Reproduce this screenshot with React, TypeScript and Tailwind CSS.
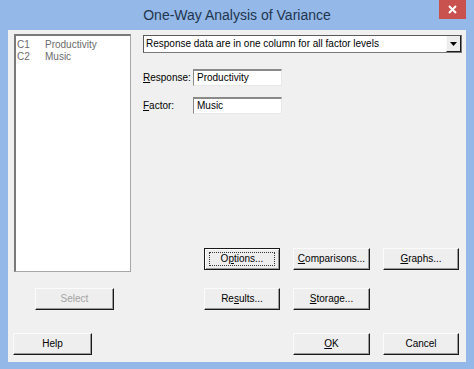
import { clsx } from "clsx";
import type { ReactNode } from "react";

function Btn({
  children,
  className,
  disabled,
  isDefault,
}: {
  children: ReactNode;
  className?: string;
  disabled?: boolean;
  isDefault?: boolean;
}) {
  return (
    <div
      className={clsx(
        "h-[22px] shrink-0 flex items-center justify-center bg-[#eeeeee] border",
        isDefault
          ? "border-[#1a1a1a] shadow-[inset_1px_1px_0_#ffffff,inset_-1px_-1px_0_#9a9a9a]"
          : "border-t-[#fbfbfb] border-l-[#fbfbfb] border-r-[#1a1a1a] border-b-[#1a1a1a] shadow-[inset_-1px_-1px_0_#9a9a9a]",
        disabled ? "text-[#a3a3a3]" : "text-black",
        className
      )}
    >
      {isDefault ? (
        <div className="w-[calc(100%-8px)] h-[14px] border border-dotted border-[#333] flex items-center justify-center">
          {children}
        </div>
      ) : (
        children
      )}
    </div>
  );
}

const U = ({ children }: { children: ReactNode }) => (
  <span className="underline underline-offset-[1px]">{children}</span>
);

export default function App() {
  return (
    <div
      className="w-[474px] h-[369px] bg-[#94b8e8] flex flex-col text-[10px] leading-[12px]"
      style={{ fontFamily: '"Liberation Sans", Arial, sans-serif' }}
    >
      {/* title bar */}
      <div className="h-[30px] relative flex items-center justify-center">
        <span className="text-[14px] text-[#22354f] pb-[1px]">One-Way Analysis of Variance</span>
        <div className="absolute top-0 right-[8px] w-[27px] h-[19px] bg-[#c9514e] flex items-center justify-center">
          <svg width="9" height="9" viewBox="0 0 9 9">
            <path d="M1 1 L8 8 M8 1 L1 8" stroke="#fff" strokeWidth="2" />
          </svg>
        </div>
      </div>

      {/* client area */}
      <div className="mx-[8px] h-[332px] bg-[#f0f0f0] flex flex-col">
        <div className="flex pt-[4px]">
          {/* variable list */}
          <div className="ml-[6px] w-[117px] h-[238px] bg-white border-t-2 border-l-2 border-t-[#7a7a7a] border-l-[#7a7a7a] border-r border-b border-r-[#a8a8a8] border-b-[#a8a8a8] pt-[3px] pl-[1px] text-[#6b6b6b]">
            <div className="flex h-[12px]">
              <span className="w-[28px]">C1</span>
              <span>Productivity</span>
            </div>
            <div className="flex h-[12px]">
              <span className="w-[28px]">C2</span>
              <span>Music</span>
            </div>
          </div>

          {/* right column */}
          <div className="ml-[12px] w-[319px] h-[238px] pt-[1px] flex flex-col">
            <div className="h-[18px] bg-white border border-[#7a7a7a] border-t-[#5a5a5a] border-l-[#5a5a5a] flex items-center">
              <span className="flex-1 pl-[2px]">Response data are in one column for all factor levels</span>
              <div className="w-[15px] h-full bg-[#ededed] border-l border-l-[#fafafa] border-r border-r-[#1a1a1a] border-b border-b-[#1a1a1a] flex items-center justify-center">
                <svg width="7" height="4" viewBox="0 0 7 4">
                  <path d="M0 0 H7 L3.5 4 Z" fill="#000" />
                </svg>
              </div>
            </div>

            <div className="flex items-center mt-[16px]">
              <span className="w-[50px]">
                <U>R</U>esponse:
              </span>
              <div className="w-[89px] h-[17px] bg-white border-t-2 border-l border-t-[#8a8a8a] border-l-[#8a8a8a] border-r border-b border-r-[#e8e8e8] border-b-[#e8e8e8] flex items-center pl-[3px]">
                Productivity
              </div>
            </div>

            <div className="flex items-center mt-[11px]">
              <span className="w-[50px]">
                <U>F</U>actor:
              </span>
              <div className="w-[89px] h-[17px] bg-white border-t-2 border-l border-t-[#8a8a8a] border-l-[#8a8a8a] border-r border-b border-r-[#e8e8e8] border-b-[#e8e8e8] flex items-center pl-[3px]">
                Music
              </div>
            </div>

            <div className="mt-auto mb-[2px] pl-[61px] flex gap-[13px]">
              <Btn isDefault className="w-[76px]">
                O<U>p</U>tions...
              </Btn>
              <Btn className="w-[77px]">
                <U>C</U>omparisons...
              </Btn>
              <Btn className="w-[76px]">
                <U>G</U>raphs...
              </Btn>
            </div>
          </div>
        </div>

        <div className="flex mt-[16px]">
          <Btn disabled className="ml-[27px] w-[79px]">
            Select
          </Btn>
          <Btn className="ml-[90px] w-[76px]">
            Re<U>s</U>ults...
          </Btn>
          <Btn className="ml-[13px] w-[77px]">
            <U>S</U>torage...
          </Btn>
        </div>

        <div className="flex mt-[23px]">
          <Btn className="ml-[5px] w-[79px]">Help</Btn>
          <Btn className="ml-[201px] w-[77px]">
            <U>O</U>K
          </Btn>
          <Btn className="ml-[13px] w-[76px]">Cancel</Btn>
        </div>
      </div>
    </div>
  );
}
